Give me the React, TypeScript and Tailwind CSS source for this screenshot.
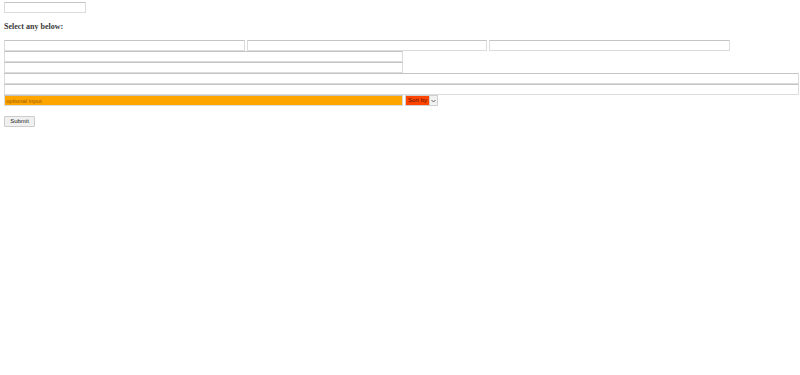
import React from "react";

const base =
  "block h-[11px] border border-[#dcdcdc] border-t-[#c4c4c4] box-border outline-none";
const inp = `${base} bg-white`;

export default function App() {
  return (
    <div className="w-[800px] h-[375px] bg-white pl-[4px] pt-[2px] font-['Liberation_Sans',sans-serif]">
      <input className={`${inp} w-[82px]`} />
      <p className="mt-[9px] mb-[8px] text-[8px] leading-[10px] font-bold text-[#3a3a3a] font-['Liberation_Serif',serif]">
        Select any below:
      </p>
      <div className="flex gap-[2px] mt-[4px]">
        <input className={`${inp} w-[241px]`} />
        <input className={`${inp} w-[240px]`} />
        <input className={`${inp} w-[241px]`} />
      </div>
      <input className={`${inp} w-[399px]`} />
      <input className={`${inp} w-[399px]`} />
      <input className={`${inp} w-[795px]`} />
      <input className={`${inp} w-[795px]`} />
      <div className="flex gap-[2px] items-start">
        <input
          className={`${base} w-[399px] bg-[#ffa500] text-[6px] px-[1px] placeholder:text-[#9a5a00]`}
          placeholder="optional input"
        />
        <div className="flex h-[11px] border border-[#d0d0d0] box-border">
          <span className="bg-[#ff4500] text-[6px] leading-[9px] px-[2px] text-[#5a1500]">Sort by</span>
          <span className="w-[8px] bg-[#f2f2f2] flex items-center justify-center border-l border-[#d0d0d0]">
            <svg width="5" height="4" viewBox="0 0 5 4">
              <path d="M0.5 1 L2.5 3 L4.5 1" stroke="#444" strokeWidth="0.8" fill="none" />
            </svg>
          </span>
        </div>
      </div>
      <button className="mt-[9px] h-[11px] w-[31px] text-[6px] leading-[9px] bg-[#f0f0f0] border border-[#cccccc] text-[#222] rounded-[1px]">
        Submit
      </button>
    </div>
  );
}
